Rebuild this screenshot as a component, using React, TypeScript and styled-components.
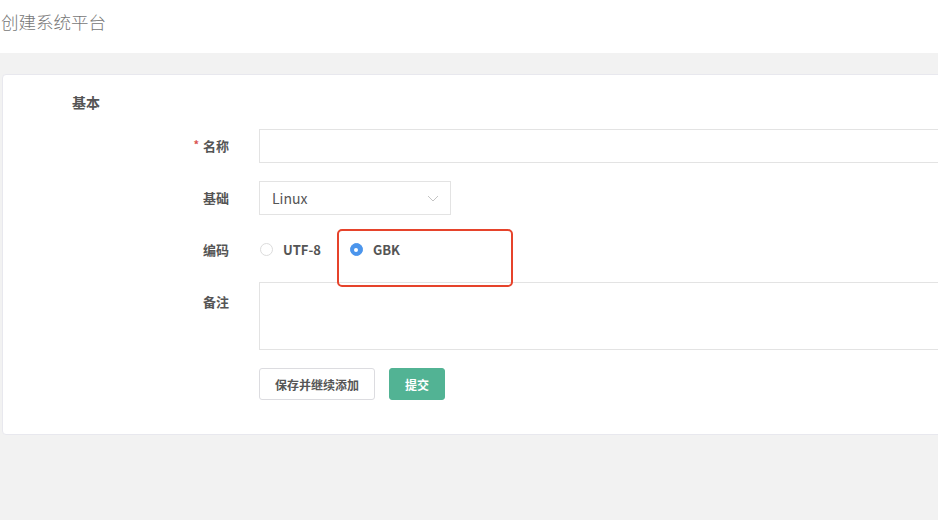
import styled, { createGlobalStyle } from 'styled-components';

const GlobalStyle = createGlobalStyle`
  html, body {
    margin: 0;
    padding: 0;
    background: #f2f2f2;
    overflow: hidden;
  }
  body {
    font-family: "Noto Sans CJK SC", "Noto Sans", "Liberation Sans", sans-serif;
  }
  * {
    box-sizing: border-box;
  }
`;

const Page = styled.div`
  width: 938px;
  height: 520px;
  display: flex;
  flex-direction: column;
  background: #f2f2f2;
`;

const Header = styled.div`
  height: 53px;
  background: #fff;
  padding: 9px 0 0 1px;
  font-size: 17.5px;
  line-height: 26px;
  color: #777;
  font-weight: 300;
`;

const Main = styled.div`
  flex: 1;
  padding: 21px 0 0 2px;
`;

const Card = styled.div`
  width: 960px;
  background: #fff;
  border: 1px solid #e8e8ee;
  border-radius: 4px;
  padding: 17px 0 34px 0;
`;

const SectionTitle = styled.div`
  padding-left: 69px;
  font-size: 14px;
  line-height: 20px;
  font-weight: 700;
  color: #555;
  margin-bottom: 17px;
`;

const Form = styled.div`
  display: grid;
  grid-template-columns: 226px 1fr;
  column-gap: 30px;
  row-gap: 18px;
`;

const Label = styled.div<{ $top?: number; $line?: number }>`
  text-align: right;
  font-size: 13px;
  font-weight: 700;
  color: #555;
  line-height: ${(p) => p.$line ?? 34}px;
  padding-top: ${(p) => p.$top ?? 0}px;
`;

const Required = styled.span`
  display: inline-block;
  line-height: 0;
  color: #d9534f;
  font-size: 11px;
  margin-right: 4px;
  position: relative;
  top: -2px;
`;

const TextInput = styled.div`
  height: 34px;
  border: 1px solid #e3e3e3;
  border-right: none;
  background: #fff;
`;

const Select = styled.div`
  width: 192px;
  height: 34px;
  border: 1px solid #e3e3e3;
  display: flex;
  align-items: center;
  justify-content: space-between;
  padding: 0 11px 0 12px;
  font-size: 14px;
  color: #555;
`;

const RadioGroup = styled.div`
  height: 31px;
  padding-top: 2px;
  display: flex;
  align-items: center;
  gap: 28px;
`;

const RadioOption = styled.label`
  position: relative;
  display: flex;
  align-items: center;
  gap: 10px;
  font-size: 13px;
  font-weight: 700;
  color: #555;
  padding-left: 1px;
`;

const RadioDot = styled.span<{ $checked?: boolean }>`
  width: 13px;
  height: 13px;
  border-radius: 50%;
  border: 1px solid ${(p) => (p.$checked ? '#4b95ec' : '#dcdcdc')};
  background: ${(p) => (p.$checked ? '#4b95ec' : '#fff')};
  display: flex;
  align-items: center;
  justify-content: center;
  &::after {
    content: '';
    width: 4px;
    height: 4px;
    border-radius: 50%;
    background: #fff;
    display: ${(p) => (p.$checked ? 'block' : 'none')};
  }
`;

const Highlight = styled.div`
  position: absolute;
  left: -12px;
  top: -11px;
  width: 176px;
  height: 58px;
  border: 2px solid #e6432b;
  border-radius: 5px;
  pointer-events: none;
`;

const TextArea = styled.div`
  height: 68px;
  border: 1px solid #e3e3e3;
  border-right: none;
  background: #fff;
`;

const Actions = styled.div`
  display: flex;
  gap: 14px;
`;

const Button = styled.button<{ $primary?: boolean }>`
  height: 32px;
  padding: 0 15px;
  border-radius: 3px;
  border: 1px solid ${(p) => (p.$primary ? '#52b394' : '#dcdce0')};
  background: ${(p) => (p.$primary ? '#52b394' : '#fff')};
  color: ${(p) => (p.$primary ? '#fff' : '#555')};
  font-family: inherit;
  font-size: 12px;
  font-weight: 700;
  cursor: pointer;
`;

const Chevron = () => (
  <svg width="12" height="7" viewBox="0 0 12 7" fill="none">
    <path d="M1 1l5 5 5-5" stroke="#c4c4c4" strokeWidth="1" />
  </svg>
);

export default function App() {
  return (
    <>
      <GlobalStyle />
      <Page>
        <Header>创建系统平台</Header>
        <Main>
          <Card>
            <SectionTitle>基本</SectionTitle>
            <Form>
              <Label>
                <Required>*</Required>名称
              </Label>
              <TextInput />

              <Label>基础</Label>
              <div>
                <Select>
                  <span>Linux</span>
                  <Chevron />
                </Select>
              </div>

              <Label $line={29} $top={2}>编码</Label>
              <RadioGroup>
                <RadioOption>
                  <RadioDot />
                  UTF-8
                </RadioOption>
                <RadioOption>
                  <RadioDot $checked />
                  GBK
                  <Highlight />
                </RadioOption>
              </RadioGroup>

              <Label $top={3}>备注</Label>
              <TextArea />

              <div />
              <Actions>
                <Button>保存并继续添加</Button>
                <Button $primary>提交</Button>
              </Actions>
            </Form>
          </Card>
        </Main>
      </Page>
    </>
  );
}
